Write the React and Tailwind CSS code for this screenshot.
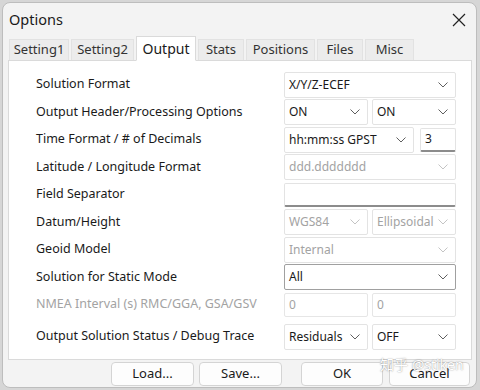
import React from "react";

const font = { fontFamily: '"Noto Sans", "Open Sans", "Noto Sans CJK SC", sans-serif' };

function Chevron({ disabled }) {
  return (
    <svg width="10" height="6" viewBox="0 0 10 6" className="shrink-0">
      <path d="M0.5 0.5 L5 5 L9.5 0.5" fill="none" stroke={disabled ? "#c4c4c4" : "#5f5f5f"} strokeWidth="1" />
    </svg>
  );
}

function Select({ value, w, disabled, focus }) {
  return (
    <div
      className={`h-[26px] ${w} flex items-center justify-between pl-[4px] pr-[7px] bg-white border rounded-[2px] text-[12px] ${
        focus ? "border-[#a0a0a0]" : "border-[#e3e3e3]"
      } ${disabled ? "text-[#a3a3a3]" : "text-[#1a1a1a]"}`}
    >
      <span className="whitespace-nowrap">{value}</span>
      <Chevron disabled={disabled} />
    </div>
  );
}

function Edit({ value, w, disabled }) {
  return (
    <div
      className={`h-[24px] ${w} flex items-center pl-[4px] bg-white border rounded-[2px] text-[12px] ${
        disabled ? "border-[#e6e6e6] text-[#a3a3a3]" : "border-[#e3e3e3] border-b-[#8c8c8c] border-b-2 text-[#1a1a1a]"
      }`}
    >
      {value}
    </div>
  );
}

function Row({ label, disabled, children, extra = "" }) {
  return (
    <div className={`h-[27.5px] flex items-center ${extra}`}>
      <div className={`w-[275px] pl-[27px] whitespace-nowrap ${disabled ? "text-[#a3a3a3]" : "text-[#1a1a1a]"}`}>{label}</div>
      <div className="flex items-center gap-[4px]">{children}</div>
    </div>
  );
}

function Tab({ label, w, selected }) {
  if (selected)
    return (
      <div className={`${w} h-[25px] -mb-px bg-white border border-[#dadada] border-b-white flex items-center justify-center text-[14px] text-[#1a1a1a] relative z-10`}>
        {label}
      </div>
    );
  return (
    <div className={`${w} h-[21px] bg-[#ececec] border border-[#e2e2e2] border-b-0 flex items-center justify-center text-[13px] text-[#333]`}>
      {label}
    </div>
  );
}

export default function App() {
  return (
    <div className="w-[480px] h-[390px] bg-[#d6d6d6] overflow-hidden relative" style={font}>
      <div className="absolute left-[2px] top-[2px] w-[475px] h-[386px] bg-[#f3f3f3] rounded-[8px] border border-[#bdbdbd] flex flex-col text-[12.5px] overflow-hidden">
        {/* title bar */}
        <div className="h-[33px] flex items-center justify-between pl-[6px] pr-[10px] shrink-0">
          <span className="text-[14.5px] text-[#1a1a1a]">Options</span>
          <svg width="14" height="14" viewBox="0 0 14 14">
            <path d="M1 1 L13 13 M13 1 L1 13" stroke="#222" strokeWidth="1.2" />
          </svg>
        </div>
        {/* tabs */}
        <div className="flex items-end pl-[6px] gap-[2px] h-[24px] shrink-0">
          <Tab label="Setting1" w="w-[60px]" />
          <Tab label="Setting2" w="w-[63px]" />
          <Tab label="Output" w="w-[60px]" selected />
          <Tab label="Stats" w="w-[46px]" />
          <Tab label="Positions" w="w-[69px]" />
          <Tab label="Files" w="w-[46px]" />
          <Tab label="Misc" w="w-[49px]" />
        </div>
        {/* panel */}
        <div className="mx-[5px] mr-[4px] h-[300px] bg-white border border-[#dadada] pt-[10px] shrink-0">
          <Row label="Solution Format">
            <Select value="X/Y/Z-ECEF" w="w-[172px]" />
          </Row>
          <Row label="Output Header/Processing Options">
            <Select value="ON" w="w-[84px]" />
            <Select value="ON" w="w-[84px]" />
          </Row>
          <Row label="Time Format / # of Decimals">
            <Select value="hh:mm:ss GPST" w="w-[130px]" />
            <div className="ml-[2px]">
              <Edit value="3" w="w-[36px]" />
            </div>
          </Row>
          <Row label="Latitude / Longitude Format">
            <Select value="ddd.ddddddd" w="w-[172px]" disabled />
          </Row>
          <Row label="Field Separator">
            <Edit value="" w="w-[172px]" />
          </Row>
          <Row label="Datum/Height">
            <Select value="WGS84" w="w-[84px]" disabled />
            <Select value="Ellipsoidal" w="w-[84px]" disabled />
          </Row>
          <Row label="Geoid Model">
            <Select value="Internal" w="w-[172px]" disabled />
          </Row>
          <Row label="Solution for Static Mode">
            <Select value="All" w="w-[172px]" focus />
          </Row>
          <Row label="NMEA Interval (s) RMC/GGA, GSA/GSV" disabled>
            <Edit value="0" w="w-[84px]" disabled />
            <Edit value="0" w="w-[84px]" disabled />
          </Row>
          <Row label="Output Solution Status / Debug Trace" extra="mt-[4.5px]">
            <Select value="Residuals" w="w-[84px]" />
            <Select value="OFF" w="w-[84px]" />
          </Row>
        </div>
        {/* buttons */}
        <div className="flex items-center h-[30px] pl-[108px] text-[13px] text-[#1a1a1a]">
          <button className="w-[83px] h-[24px] bg-[#fdfdfd] border border-[#d4d4d4] rounded-[4px]">Load...</button>
          <button className="ml-[5px] w-[83px] h-[24px] bg-[#fdfdfd] border border-[#d4d4d4] rounded-[4px]">Save...</button>
          <button className="ml-[19px] w-[82px] h-[24px] bg-[#fdfdfd] border border-[#d4d4d4] rounded-[4px]">OK</button>
          <button className="ml-[6px] w-[81px] h-[24px] bg-[#fdfdfd] border border-[#d4d4d4] rounded-[4px]">Cancel</button>
        </div>
      </div>
      <div
        className="absolute left-[380px] top-[355px] text-[14px] leading-[20px] text-white whitespace-nowrap"
        style={{ textShadow: "0 0 1.5px rgba(0,0,0,0.5)" }}
      >
        知乎 @stiken
      </div>
    </div>
  );
}
